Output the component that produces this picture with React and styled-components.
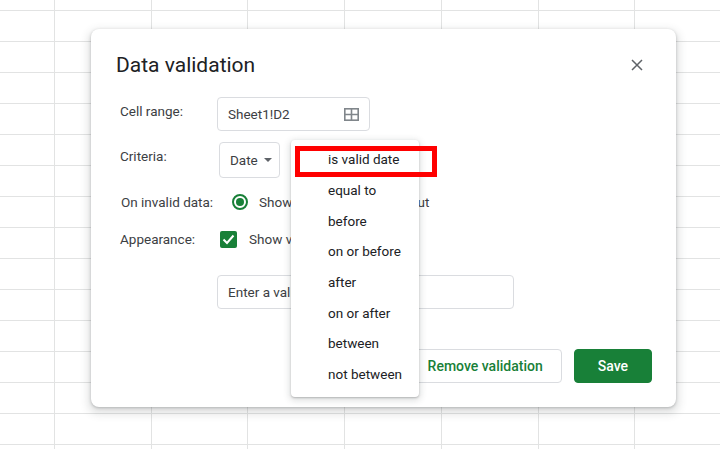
import React from "react";
import styled, { createGlobalStyle } from "styled-components";

const Global = createGlobalStyle`
  html,body{margin:0;padding:0;}
  body{font-family:Roboto,"Liberation Sans",sans-serif;color:#3c4043;}
`;

const Sheet = styled.div`
  width:720px;height:449px;position:relative;overflow:hidden;
  background-color:#fff;
  background-image:
    repeating-linear-gradient(to right, transparent 0 54px, #e2e3e3 54px 55px, transparent 55px 96.7px),
    repeating-linear-gradient(to bottom, transparent 0 10px, #e2e3e3 10px 11px, transparent 11px 31px);
  padding:29px 0 0 91px;box-sizing:border-box;
`;

const Dialog = styled.div`
  width:585px;height:378px;background:#fff;border-radius:8px;
  box-shadow:0 1px 3px rgba(60,64,67,.3),0 4px 8px 3px rgba(60,64,67,.15);
  box-sizing:border-box;padding:22px 24px 0 25px;position:relative;
`;

const Header = styled.div`
  display:flex;justify-content:space-between;align-items:center;height:28px;margin-bottom:18px;
`;
const Title = styled.div`font-size:21px;color:#202124;`;
const Close = styled.button`border:0;background:none;padding:0;margin-right:9px;display:flex;color:#5f6368;`;

const Row = styled.div`
  display:flex;align-items:center;height:${p=>p.h}px;margin-bottom:${p=>p.mb}px;font-size:13.5px;
`;
const Label = styled.div`width:${p=>p.w||101}px;padding-left:${p=>p.pl||4}px;color:#3c4043;box-sizing:border-box;align-self:${p=>p.top?"flex-start":"center"};`;

const Field = styled.div`
  width:${p=>p.w}px;height:34px;border:1px solid #dadce0;border-radius:4px;box-sizing:border-box;
  display:flex;align-items:center;justify-content:space-between;padding:0 10px;font-size:13.5px;color:#3c4043;
`;
const Select = styled(Field)`height:36px;margin-left:2px;gap:6px;justify-content:flex-start;`;
const Caret = styled.span`width:0;height:0;border-left:4px solid transparent;border-right:4px solid transparent;border-top:4px solid #5f6368;`;

const Radio = styled.span`
  width:12px;height:12px;border:2px solid #188038;border-radius:50%;display:inline-flex;align-items:center;justify-content:center;margin:0 11px 0 8px;
  &::after{content:"";width:8px;height:8px;border-radius:50%;background:#188038;}
`;
const Check = styled.span`
  width:17px;height:17px;border-radius:2px;background:#188038;display:inline-flex;align-items:center;justify-content:center;margin:0 12px 0 2px;
`;
const Gap = styled.span`display:inline-block;width:${p=>p.w}px;`;

const Footer = styled.div`display:flex;justify-content:flex-end;gap:12px;margin-top:40px;`;
const Btn = styled.button`
  height:34px;border-radius:4px;font-family:Roboto,sans-serif;font-size:14px;font-weight:500;padding:0 ${p=>p.px}px;
  border:1px solid ${p=>p.primary?"#188038":"#dadce0"};background:${p=>p.primary?"#188038":"#fff"};color:${p=>p.primary?"#fff":"#188038"};
`;

const Menu = styled.div`
  position:absolute;left:291px;top:140px;width:128px;height:257px;background:#fff;border-radius:4px;
  box-shadow:0 1px 2px rgba(60,64,67,.3),0 2px 6px 2px rgba(60,64,67,.15);padding-top:4px;box-sizing:border-box;
`;
const Item = styled.div`height:30.7px;display:flex;align-items:center;padding-left:37px;font-size:13.5px;color:#202124;`;
const Highlight = styled.div`
  position:absolute;left:295px;top:146px;width:142px;height:31px;border:5px solid #f00;box-sizing:border-box;
`;

const items=["is valid date","equal to","before","on or before","after","on or after","between","not between"];

export default function App(){
  return (<>
    <Global/>
    <Sheet>
      <Dialog>
        <Header>
          <Title>Data validation</Title>
          <Close><svg width="12" height="12" viewBox="0 0 12 12"><path d="M1 1L11 11M11 1L1 11" stroke="#5f6368" strokeWidth="1.5"/></svg></Close>
        </Header>
        <Row h={34} mb={11}><Label top style={{marginTop:6}}>Cell range:</Label>
          <Field w={153}>Sheet1!D2
            <svg width="15" height="13" viewBox="0 0 15 13"><rect x="0.8" y="0.8" width="13.4" height="11.4" fill="none" stroke="#80868b" strokeWidth="1.6"/><path d="M7.5 1V12M1 6.5H14" stroke="#80868b" strokeWidth="1.6"/></svg>
          </Field></Row>
        <Row h={36} mb={11}><Label top style={{marginTop:6}}>Criteria:</Label>
          <Select w={61}>Date<Caret/></Select></Row>
        <Row h={26} mb={11}><Label w={108} pl={5}>On invalid data:</Label><Radio/>Show w<Gap w={104}/>out</Row>
        <Row h={26} mb={23}><Label w={102}>Appearance:</Label>
          <Check><svg width="13" height="11" viewBox="0 0 13 11"><path d="M1.5 5.5L5 9L11.5 1.5" fill="none" stroke="#fff" strokeWidth="2"/></svg></Check>Show v</Row>
        <Row h={34} mb={0}><Gap w={101}/><Field w={297}>Enter a vali</Field></Row>
        <Footer>
          <Btn px={18}>Remove validation</Btn>
          <Btn primary px={23}>Save</Btn>
        </Footer>
      </Dialog>
      <Menu>{items.map(t=><Item key={t}>{t}</Item>)}</Menu>
      <Highlight/>
    </Sheet>
  </>);
}
